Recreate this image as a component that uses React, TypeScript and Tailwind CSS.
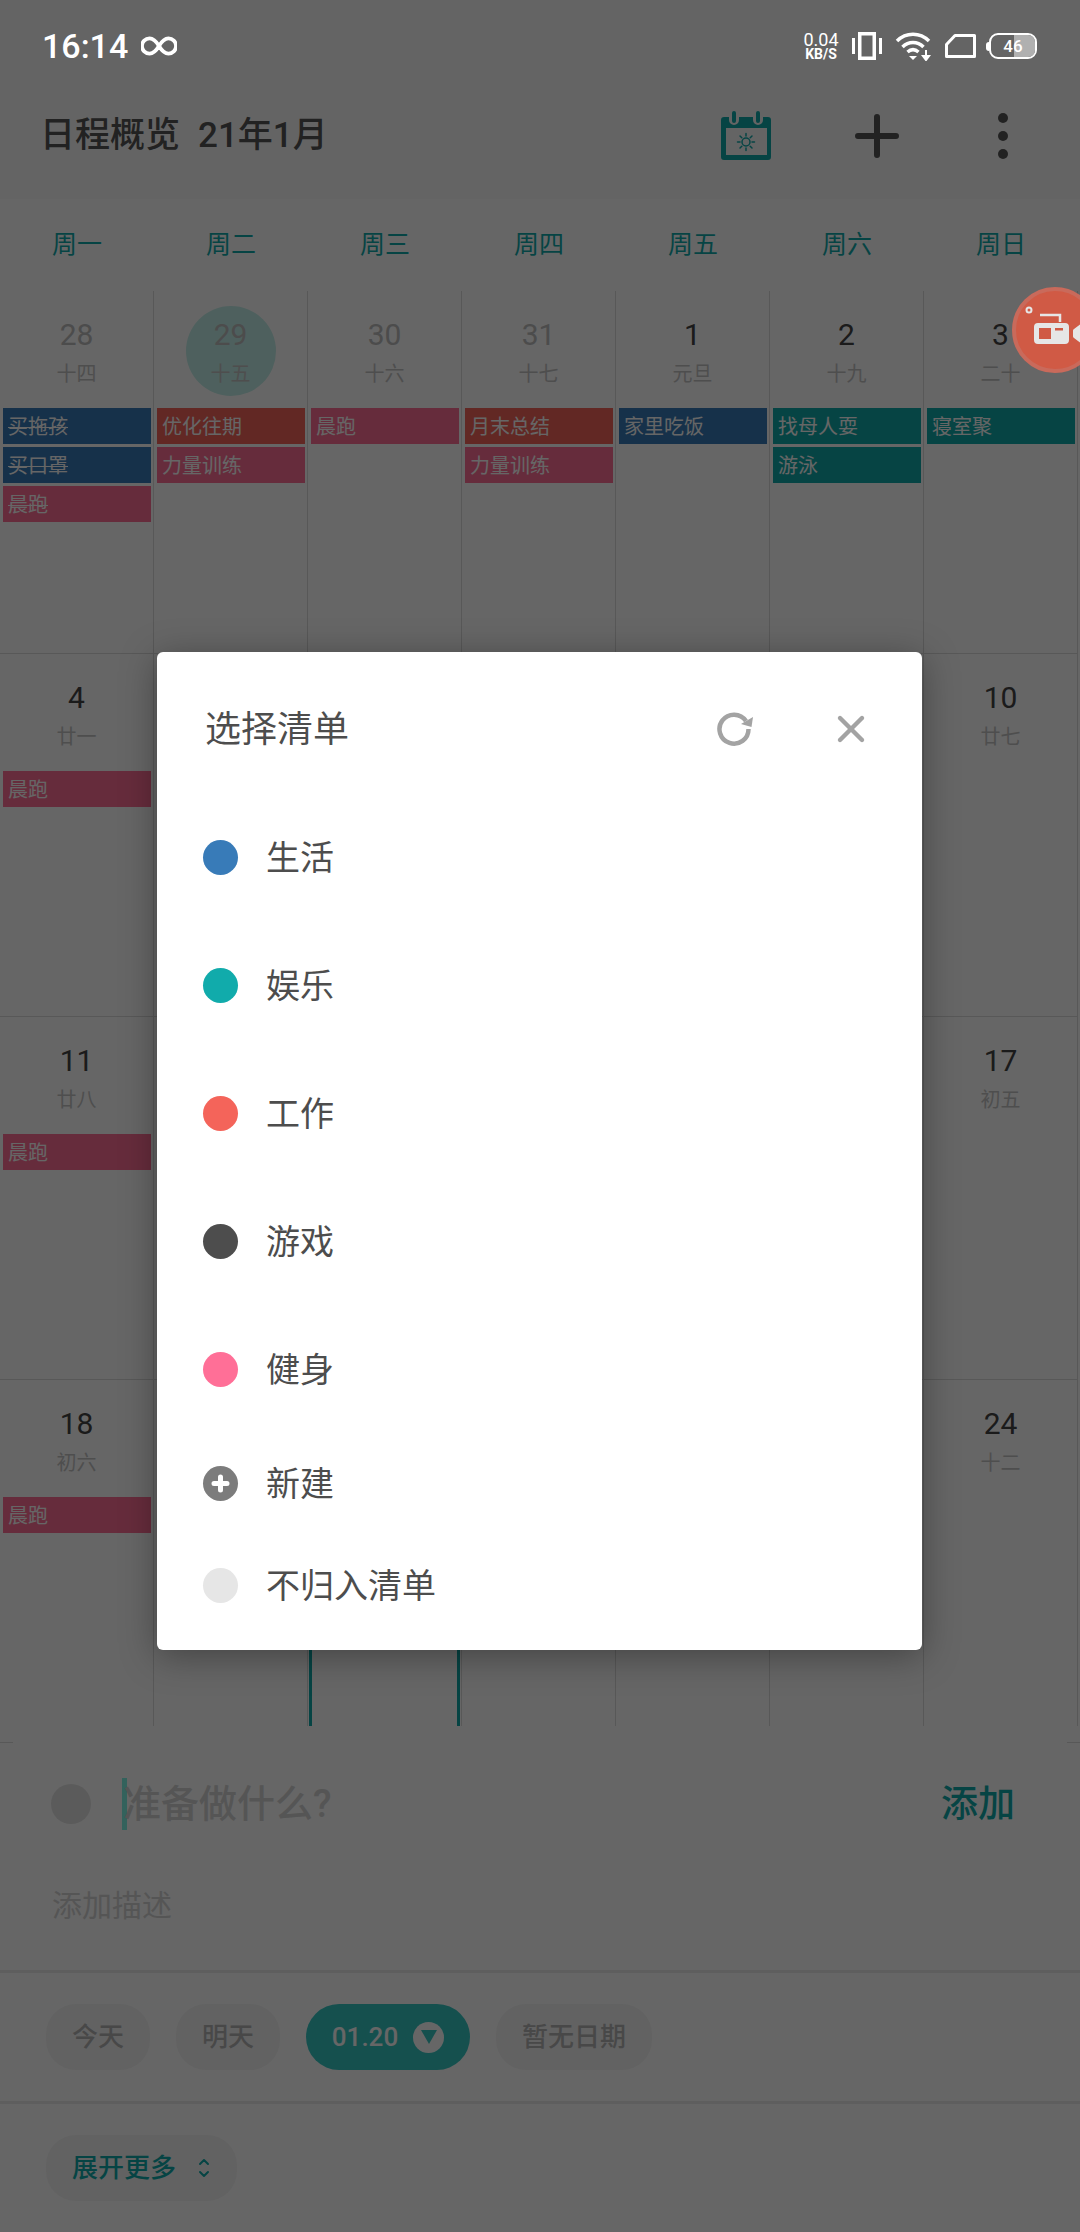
import { ChevronDown, ChevronUp, X } from 'lucide-react';

type Tone = 'blue' | 'teal' | 'red' | 'pink';

interface CalEvent {
  title: string;
  tone: Tone;
  done?: boolean;
}

interface Cell {
  day?: string;
  lunar?: string;
  muted?: boolean;
  today?: boolean;
  selected?: boolean;
  events?: CalEvent[];
}

const toneClass: Record<Tone, string> = {
  blue: 'bg-[#387bb8]',
  teal: 'bg-[#11abab]',
  red: 'bg-[#f4645a]',
  pink: 'bg-[#ff6f97]',
};

const weekdays = ['周一', '周二', '周三', '周四', '周五', '周六', '周日'];

const run: CalEvent = { title: '晨跑', tone: 'pink' };

// the middle columns of the lower rows sit behind the dialog, they stay empty
const hidden: Cell[] = [{}, {}, {}, {}, {}];

const cells: Cell[] = [
  {
    day: '28',
    lunar: '十四',
    muted: true,
    events: [
      { title: '买拖孩', tone: 'blue', done: true },
      { title: '买口罩', tone: 'blue', done: true },
      { title: '晨跑', tone: 'pink', done: true },
    ],
  },
  {
    day: '29',
    lunar: '十五',
    muted: true,
    today: true,
    events: [
      { title: '优化往期', tone: 'red' },
      { title: '力量训练', tone: 'pink' },
    ],
  },
  { day: '30', lunar: '十六', muted: true, events: [run] },
  {
    day: '31',
    lunar: '十七',
    muted: true,
    events: [
      { title: '月末总结', tone: 'red' },
      { title: '力量训练', tone: 'pink' },
    ],
  },
  { day: '1', lunar: '元旦', events: [{ title: '家里吃饭', tone: 'blue' }] },
  {
    day: '2',
    lunar: '十九',
    events: [
      { title: '找母人耍', tone: 'teal' },
      { title: '游泳', tone: 'teal' },
    ],
  },
  { day: '3', lunar: '二十', events: [{ title: '寝室聚', tone: 'teal' }] },

  { day: '4', lunar: '廿一', events: [run] },
  ...hidden,
  { day: '10', lunar: '廿七' },

  { day: '11', lunar: '廿八', events: [run] },
  ...hidden,
  { day: '17', lunar: '初五' },

  { day: '18', lunar: '初六', events: [run] },
  {},
  { selected: true },
  {},
  {},
  {},
  { day: '24', lunar: '十二' },
];

const lists = [
  { name: '生活', color: 'bg-[#387bb8]' },
  { name: '娱乐', color: 'bg-[#11abab]' },
  { name: '工作', color: 'bg-[#f4645a]' },
  { name: '游戏', color: 'bg-[#4d4d4d]' },
  { name: '健身', color: 'bg-[#ff6f97]' },
];

function StatusBar() {
  return (
    <div className="relative z-20 flex h-[92px] items-center justify-between pl-[42px] pr-[43px] text-white">
      <div className="flex items-center gap-[13px]">
        <span className="text-[34px] font-medium leading-none font-['Roboto',sans-serif]">16:14</span>
        <svg width="36" height="20" viewBox="0 0 38 20" fill="none" stroke="white" strokeWidth="4">
          <path d="M19 10c-3-5-6-8-10-8a8 8 0 0 0 0 16c4 0 7-3 10-8s6-8 10-8a8 8 0 0 1 0 16c-4 0-7-3-10-8z" />
        </svg>
      </div>
      <div className="flex items-center">
        <div className="flex w-[36px] flex-col items-center font-['Roboto',sans-serif] leading-none">
          <span className="text-[18px] leading-[16px]">0.04</span>
          <span className="text-[14px] font-bold leading-[13px]">KB/S</span>
        </div>
        <svg className="ml-[13px]" width="30" height="28" viewBox="0 0 30 28" fill="white">
          <path d="M6 0h18v28H6zM9.500 3.500v21h11v-21z" fillRule="evenodd" />
          <rect x="0" y="6" width="3" height="16" />
          <rect x="27" y="6" width="3" height="16" />
        </svg>
        <svg className="ml-[13px]" width="36" height="30" viewBox="0 0 36 30" fill="none" stroke="white" strokeWidth="3.500">
          <path d="M2 10c9-9 23-9 32 0" />
          <path d="M7.500 16c6-6 15-6 21 0" />
          <path d="M12.500 21c3.500-3 7.500-3 11 0" />
          <path d="M14 25h8l-4 4z" fill="white" stroke="none" />
          <path d="M31 19v6M28 25h6l-3 4z" fill="white" stroke="white" strokeWidth="2" />
        </svg>
        <svg className="ml-[14px]" width="31" height="24" viewBox="0 0 31 24" fill="none" stroke="white" strokeWidth="3">
          <path d="M10 1.500h19.500v21h-28v-12z" strokeLinejoin="round" />
        </svg>
        <span className="ml-[10px] h-[9px] w-[3px] rounded-l-full bg-white" />
        <div className="relative flex h-[26px] w-[48px] items-center justify-center overflow-hidden rounded-[9px] border-[2px] border-white">
          <div className="absolute inset-y-0 right-0 w-[21px] bg-[#b0b0b0]" />
          <span className="relative text-[17px] font-medium leading-none font-['Roboto',sans-serif]">46</span>
        </div>
      </div>
    </div>
  );
}

function CalendarIcon() {
  return (
    <svg width="50" height="50" viewBox="0 0 50 50" fill="#11abab">
      <path
        fillRule="evenodd"
        d="M3 6h5v3a5 5 0 0 0 10 0V6h14v3a5 5 0 0 0 10 0V6h5a3 3 0 0 1 3 3v37a3 3 0 0 1-3 3H3a3 3 0 0 1-3-3V9a3 3 0 0 1 3-3zM5 17v27h41V17z"
      />
      <rect x="11" y="0" width="4" height="12" rx="2" />
      <rect x="35" y="0" width="4" height="12" rx="2" />
      <circle cx="25" cy="31" r="4" fill="none" stroke="#11abab" strokeWidth="1.500" />
      <g stroke="#11abab" strokeWidth="1.500" strokeLinecap="round" transform="translate(0 -2)">
        <path d="M25 24.500v2.500M25 39v2.500M16.500 33H19M31 33h2.500M19 27l1.800 1.800M29.200 37.200l1.800 1.800M19 39l1.800-1.800M29.200 28.800L31 27" />
      </g>
    </svg>
  );
}

function Header() {
  return (
    <div className="flex h-[107px] items-center justify-between pb-[20px] pl-[40px] text-[#555]">
      <div className="flex items-center gap-[18px] text-[35px] font-medium leading-none">
        <span>日程概览</span>
        <span>21年1月</span>
      </div>
      <div className="flex items-center pr-[72px]">
        <CalendarIcon />
        <svg className="ml-[84px]" width="44" height="44" viewBox="0 0 44 44" stroke="#555" strokeWidth="6" strokeLinecap="round">
          <path d="M22 3v38M3 22h38" />
        </svg>
        <div className="ml-[99px] flex flex-col gap-[8px]">
          <span className="h-[10px] w-[10px] rounded-full bg-[#555]" />
          <span className="h-[10px] w-[10px] rounded-full bg-[#555]" />
          <span className="h-[10px] w-[10px] rounded-full bg-[#555]" />
        </div>
      </div>
    </div>
  );
}

function DayCell({ cell, lastRow }: { cell: Cell; lastRow: boolean }) {
  return (
    <div className={`relative flex flex-col items-stretch border-r border-[#dcdcdc] ${lastRow ? '' : 'border-b'}`}>
      {cell.today && (
        <div className="absolute left-[32px] top-[15px] h-[90px] w-[90px] rounded-full bg-[#c4f0ea]" />
      )}
      {cell.selected && (
        <div className="absolute inset-y-0 left-[1px] right-[1px] border-x-[3px] border-[#11abab]" />
      )}
      {cell.day && (
        <>
          <div
            className={`relative pt-[29px] text-center text-[30px] leading-[30px] font-['Roboto',sans-serif] ${
              cell.muted ? 'text-[#bdbdbd]' : 'text-[#444]'
            }`}
          >
            {cell.day}
          </div>
          <div className="relative mt-[10px] text-center text-[20px] leading-[28px] text-[#c4c4c4]">{cell.lunar}</div>
          <div className="relative mt-[20px] flex flex-col gap-[3px] pl-[3px] pr-[2px]">
            {(cell.events ?? []).map((ev) => (
              <div
                key={ev.title}
                className={`h-[36px] pl-[5px] text-[20px] leading-[39px] text-white ${toneClass[ev.tone]}`}
              >
                <span className={ev.done ? 'line-through decoration-from-font' : ''}>{ev.title}</span>
              </div>
            ))}
          </div>
        </>
      )}
    </div>
  );
}

function Composer() {
  return (
    <div className="flex flex-1 flex-col">
      <div className="flex h-[17px] items-end justify-between">
        <span className="h-px w-[13px] bg-[#dcdcdc]" />
        <span className="h-px w-[13px] bg-[#dcdcdc]" />
      </div>
      <div className="flex h-[122px] items-center justify-between pl-[51px] pr-[65px]">
        <div className="flex items-center">
          <span className="h-[40px] w-[40px] rounded-full bg-[#e4e4e4]" />
          <span className="ml-[31px] h-[52px] w-[5px] bg-[#80f5e6]" />
          <span className="-ml-[4px] text-[38px] font-medium leading-none text-[#d4d4d4]">准备做什么?</span>
        </div>
        <span className="text-[37px] font-medium leading-none text-[#11abab]">添加</span>
      </div>
      <div className="flex h-[105px] items-start pl-[52px] pt-[22px] text-[30px] leading-[38px] text-[#d4d4d4]">
        添加描述
      </div>
      <div className="h-[3px] bg-[#ececec]" />
      <div className="flex h-[128px] items-center gap-[26px] pl-[46px] text-[26px] font-medium text-[#b4b4b4]">
        <span className="flex h-[66px] w-[104px] items-center justify-center rounded-[30px] bg-[#f6f6f6]">今天</span>
        <span className="flex h-[66px] w-[104px] items-center justify-center rounded-[30px] bg-[#f6f6f6]">明天</span>
        <span className="flex h-[66px] w-[164px] items-center justify-center gap-[15px] rounded-[33px] bg-[#36c7c4] text-white">
          <span className="font-['Roboto',sans-serif]">01.20</span>
          <span className="flex h-[31px] w-[31px] items-center justify-center rounded-full bg-white">
            <svg width="16" height="14" viewBox="0 0 16 14" fill="#36c7c4">
              <path d="M0 0h16l-8 14z" />
            </svg>
          </span>
        </span>
        <span className="flex h-[66px] w-[156px] items-center justify-center rounded-[30px] bg-[#f6f6f6]">暂无日期</span>
      </div>
      <div className="h-[3px] bg-[#ececec]" />
      <div className="pl-[46px] pt-[31px]">
        <span className="flex h-[66px] w-[191px] items-center gap-[20px] rounded-[30px] bg-[#f6f6f6] pl-[26px] text-[26px] font-medium text-[#11abab]">
          展开更多
          <span className="flex flex-col">
            <ChevronUp className="-mb-[4px] h-[16px] w-[16px]" strokeWidth={3} />
            <ChevronDown className="h-[16px] w-[16px]" strokeWidth={3} />
          </span>
        </span>
      </div>
    </div>
  );
}

function ListDialog() {
  return (
    <div className="flex h-[998px] w-[765px] flex-col rounded-[6px] bg-white text-[#4d4d4d] shadow-[0_6px_36px_rgba(0,0,0,0.35)]">
      <div className="flex h-[110px] shrink-0 items-center justify-between pl-[48px] pr-[49px] pt-[44px]">
        <span className="pt-[2px] text-[36px] leading-none">选择清单</span>
        <div className="flex items-center gap-[76px]">
          <svg width="36" height="36" viewBox="0 0 36 36" fill="none" stroke="#a3a3a3" strokeWidth="4.500">
            <path d="M29 10A14.500 14.500 0 1 0 31.500 18" />
            <path d="M36 6L34.500 16L24 13Z" fill="#a3a3a3" stroke="none" />
          </svg>
          <X className="h-[44px] w-[44px] text-[#a3a3a3]" strokeWidth={2.4} />
        </div>
      </div>
      <div className="flex flex-col pl-[46px] pt-[31px]">
        {lists.map((item) => (
          <div key={item.name} className="flex h-[128px] items-center gap-[28px]">
            <span className={`h-[35px] w-[35px] rounded-full ${item.color}`} />
            <span className="pt-[2px] text-[34px] leading-none">{item.name}</span>
          </div>
        ))}
        <div className="flex h-[100px] items-center gap-[28px]">
          <span className="flex h-[35px] w-[35px] items-center justify-center rounded-full bg-[#7c7c7c]">
            <svg width="19" height="19" viewBox="0 0 19 19" stroke="white" strokeWidth="5" strokeLinecap="round">
              <path d="M9.500 3v13M3 9.500h13" />
            </svg>
          </span>
          <span className="pt-[2px] text-[34px] leading-none">新建</span>
        </div>
        <div className="flex h-[104px] items-center gap-[28px]">
          <span className="h-[35px] w-[35px] rounded-full bg-[#e6e6e6]" />
          <span className="pt-[2px] text-[34px] leading-none">不归入清单</span>
        </div>
      </div>
    </div>
  );
}

function RecorderBubble() {
  return (
    <div className="absolute left-[1012px] top-[287px] z-20 h-[86px] w-[86px] rounded-full border-[4px] border-[#c96a5b] bg-[#d05a45]">
      <svg className="absolute left-0 top-0" width="78" height="78" viewBox="0 0 78 78">
        <circle cx="13" cy="19" r="2.500" fill="none" stroke="#e6e6e6" strokeWidth="2" />
        <path d="M24 24h20v7" fill="none" stroke="#e6e6e6" strokeWidth="2.500" />
        <path
          fillRule="evenodd"
          d="M22 32h27a4 4 0 0 1 4 4v13a4 4 0 0 1-4 4H22a4 4 0 0 1-4-4V36a4 4 0 0 1 4-4zM23 37v11h12V37zM39 37v2.500h8V37z"
          fill="#e6e6e6"
        />
        <path d="M66 32l-8 6a2 2 0 0 0-1 2v5a2 2 0 0 0 1 2l8 6z" fill="#e6e6e6" />
      </svg>
    </div>
  );
}

export default function App() {
  return (
    <div className="relative flex h-[2232px] w-[1080px] flex-col overflow-hidden bg-white font-['Roboto','Noto_Sans_CJK_SC',sans-serif]">
      <div className="bg-[#fafafa]">
        <StatusBar />
        <Header />
      </div>
      <div className="grid h-[92px] w-[1078px] grid-cols-7 items-center pb-[6px] text-center text-[25px] leading-none text-[#11abab]">
        {weekdays.map((d) => (
          <span key={d} className="font-['Noto_Sans_CJK_SC',sans-serif]">{d}</span>
        ))}
      </div>
      <div className="grid h-[1435px] w-[1078px] shrink-0 grid-cols-7 grid-rows-[363px_363px_363px_346px]">
        {cells.map((cell, i) => (
          <DayCell key={i} cell={cell} lastRow={i >= 21} />
        ))}
      </div>
      <Composer />

      {/* scrim + dialog sit above the page, status bar and bubble above the scrim */}
      <div className="absolute inset-0 z-10 flex bg-black/60 pl-[157px] pt-[652px]">
        <ListDialog />
      </div>
      <RecorderBubble />
    </div>
  );
}
